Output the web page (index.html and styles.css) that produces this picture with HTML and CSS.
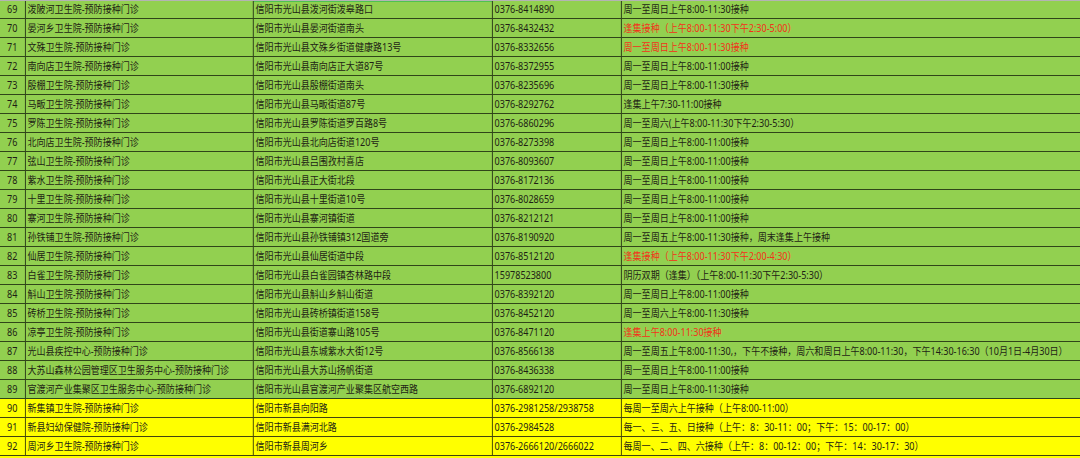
FILE: index.html
```html
<!DOCTYPE html>
<html lang="zh-CN">
<head>
<meta charset="utf-8">
<title>预防接种门诊</title>
<link rel="stylesheet" href="styles.css">
</head>
<body>
<div class="sheet">
  <div class="table">
    <div class="row first"><div class="c num">69</div><div class="c">泼陂河卫生院-预防接种门诊</div><div class="c addr">信阳市光山县泼河街泼皋路口</div><div class="c">0376-8414890</div><div class="c">周一至周日上午8:00-11:30接种</div></div>
    <div class="row"><div class="c num">70</div><div class="c">晏河乡卫生院-预防接种门诊</div><div class="c addr">信阳市光山县晏河街道南头</div><div class="c">0376-8432432</div><div class="c red">逢集接种（上午8:00-11:30下午2:30-5:00）</div></div>
    <div class="row"><div class="c num">71</div><div class="c">文殊卫生院-预防接种门诊</div><div class="c addr">信阳市光山县文殊乡街道健康路13号</div><div class="c">0376-8332656</div><div class="c red">周一至周日上午8:00-11:30接种</div></div>
    <div class="row"><div class="c num">72</div><div class="c">南向店卫生院-预防接种门诊</div><div class="c addr">信阳市光山县南向店正大道87号</div><div class="c">0376-8372955</div><div class="c">周一至周日上午8:00-11:00接种</div></div>
    <div class="row"><div class="c num">73</div><div class="c">殷棚卫生院-预防接种门诊</div><div class="c addr">信阳市光山县殷棚街道南头</div><div class="c">0376-8235696</div><div class="c">周一至周日上午8:00-11:30接种</div></div>
    <div class="row"><div class="c num">74</div><div class="c">马畈卫生院-预防接种门诊</div><div class="c addr">信阳市光山县马畈街道87号</div><div class="c">0376-8292762</div><div class="c">逢集上午7:30-11:00接种</div></div>
    <div class="row"><div class="c num">75</div><div class="c">罗陈卫生院-预防接种门诊</div><div class="c addr">信阳市光山县罗陈街道罗百路8号</div><div class="c">0376-6860296</div><div class="c">周一至周六(上午8:00-11:30下午2:30-5:30）</div></div>
    <div class="row"><div class="c num">76</div><div class="c">北向店卫生院-预防接种门诊</div><div class="c addr">信阳市光山县北向店街道120号</div><div class="c">0376-8273398</div><div class="c">周一至周日上午8:00-11:00接种</div></div>
    <div class="row"><div class="c num">77</div><div class="c">弦山卫生院-预防接种门诊</div><div class="c addr">信阳市光山县吕围孜村喜店</div><div class="c">0376-8093607</div><div class="c">周一至周日上午8:00-11:00接种</div></div>
    <div class="row"><div class="c num">78</div><div class="c">紫水卫生院-预防接种门诊</div><div class="c addr">信阳市光山县正大街北段</div><div class="c">0376-8172136</div><div class="c">周一至周日上午8:00-11:00接种</div></div>
    <div class="row"><div class="c num">79</div><div class="c">十里卫生院-预防接种门诊</div><div class="c addr">信阳市光山县十里街道10号</div><div class="c">0376-8028659</div><div class="c">周一至周日上午8:00-11:00接种</div></div>
    <div class="row"><div class="c num">80</div><div class="c">寨河卫生院-预防接种门诊</div><div class="c addr">信阳市光山县寨河镇街道</div><div class="c">0376-8212121</div><div class="c">周一至周日上午8:00-11:00接种</div></div>
    <div class="row"><div class="c num">81</div><div class="c">孙铁铺卫生院-预防接种门诊</div><div class="c addr">信阳市光山县孙铁铺镇312国道旁</div><div class="c">0376-8190920</div><div class="c">周一至周五上午8:00-11:30接种，周末逢集上午接种</div></div>
    <div class="row"><div class="c num">82</div><div class="c">仙居卫生院-预防接种门诊</div><div class="c addr">信阳市光山县仙居街道中段</div><div class="c">0376-8512120</div><div class="c red">逢集接种（上午8:00-11:30下午2:00-4:30）</div></div>
    <div class="row"><div class="c num">83</div><div class="c">白雀卫生院-预防接种门诊</div><div class="c addr">信阳市光山县白雀园镇杏林路中段</div><div class="c">15978523800</div><div class="c">阴历双期（逢集）（上午8:00-11:30下午2:30-5:30）</div></div>
    <div class="row"><div class="c num">84</div><div class="c">斛山卫生院-预防接种门诊</div><div class="c addr">信阳市光山县斛山乡斛山街道</div><div class="c">0376-8392120</div><div class="c">周一至周日上午8:00-11:00接种</div></div>
    <div class="row"><div class="c num">85</div><div class="c">砖桥卫生院-预防接种门诊</div><div class="c addr">信阳市光山县砖桥镇街道158号</div><div class="c">0376-8452120</div><div class="c">周一至周六上午8:00-11:30接种</div></div>
    <div class="row"><div class="c num">86</div><div class="c">凉亭卫生院-预防接种门诊</div><div class="c addr">信阳市光山县街道寨山路105号</div><div class="c">0376-8471120</div><div class="c red">逢集上午8:00-11:30接种</div></div>
    <div class="row"><div class="c num">87</div><div class="c">光山县疾控中心-预防接种门诊</div><div class="c addr">信阳市光山县东城紫水大街12号</div><div class="c">0376-8566138</div><div class="c">周一至周五上午8:00-11:30,，下午不接种，周六和周日上午8:00-11:30，下午14:30-16:30（10月1日-4月30日）</div></div>
    <div class="row"><div class="c num">88</div><div class="c">大苏山森林公园管理区卫生服务中心-预防接种门诊</div><div class="c addr">信阳市光山县大苏山扬帆街道</div><div class="c">0376-8436338</div><div class="c">周一至周日上午8:00-11:00接种</div></div>
    <div class="row"><div class="c num">89</div><div class="c">官渡河产业集聚区卫生服务中心-预防接种门诊</div><div class="c addr">信阳市光山县官渡河产业聚集区航空西路</div><div class="c">0376-6892120</div><div class="c">周一至周日上午8:00-11:30接种</div></div>
    <div class="row yellow"><div class="c num">90</div><div class="c">新集镇卫生院-预防接种门诊</div><div class="c addr">信阳市新县向阳路</div><div class="c">0376-2981258/2938758</div><div class="c">每周一至周六上午接种（上午8:00-11:00）</div></div>
    <div class="row yellow"><div class="c num">91</div><div class="c">新县妇幼保健院-预防接种门诊</div><div class="c addr">信阳市新县满河北路</div><div class="c">0376-2984528</div><div class="c">每一、三、五、日接种（上午：8：30-11：00；下午：15：00-17：00）</div></div>
    <div class="row yellow"><div class="c num">92</div><div class="c">周河乡卫生院-预防接种门诊</div><div class="c addr">信阳市新县周河乡</div><div class="c">0376-2666120/2666022</div><div class="c">每周一、二、四、六接种（上午：8：00-12：00；下午：14：30-17：30）</div></div>
  </div>
</div>
</body>
</html>
```

FILE: styles.css
```css
html, body {
  margin: 0;
  padding: 0;
  background: #ffff00;
  overflow: hidden;
}

.sheet {
  width: 1080px;
  height: 458px;
  overflow: hidden;
  background: #ffff00;
}

.table {
  width: 1256px;
  transform: scaleX(0.86);
  transform-origin: 0 0;
  font-family: "Noto Sans", "Noto Sans CJK SC", sans-serif;
  font-size: 10.5px;
  color: #1e1e14;
}

.row {
  display: grid;
  grid-template-columns: 29.6px 265.2px 277.9px 150px 1fr;
  height: 19px;
  box-sizing: border-box;
  border-bottom: 1px solid rgba(20, 30, 10, 0.78);
  background: #92d050;
}

.row.first {
  height: 19px;
  border-top: 1px solid #b4b4b4;
}

.row.first .addr {
  box-shadow: inset 0 1px 0 #4fc24f;
}

.row.yellow {
  background: #ffff00;
  border-bottom-color: rgba(20, 20, 20, 0.8);
}

.c {
  box-sizing: border-box;
  border-right: 1px solid rgba(15, 20, 10, 0.88);
  padding-left: 2.4px;
  line-height: 18px;
  white-space: nowrap;
  overflow: hidden;
}

.first .c {
  line-height: 17px;
}

.c:last-child {
  border-right: none;
  overflow: visible;
}

.num {
  padding-left: 0;
  text-align: center;
}

.red {
  color: #f2301a;
}
```
